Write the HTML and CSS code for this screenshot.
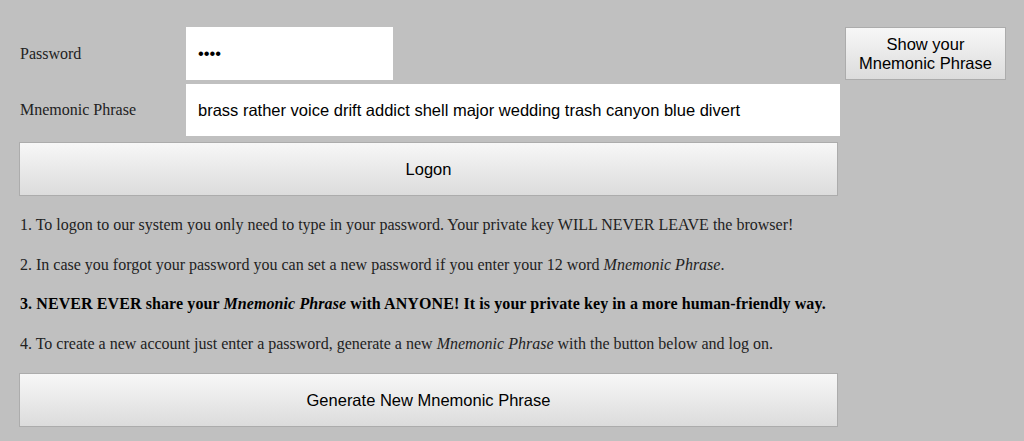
FILE: index.html
```html
<!DOCTYPE html>
<html>
<head>
<meta charset="utf-8">
<link rel="stylesheet" href="styles.css">
</head>
<body>
<div class="page">
  <div class="form">
    <label class="label" for="pw">Password</label>
    <div class="field"><input id="pw" class="input input-short" type="password" value="1234"></div>
    <button class="btn btn-show">Show your<br>Mnemonic Phrase</button>
    <label class="label" for="mn">Mnemonic Phrase</label>
    <div class="field"><input id="mn" class="input input-long" type="text" value="brass rather voice drift addict shell major wedding trash canyon blue divert"></div>
    <div></div>
  </div>
  <button class="btn btn-wide btn-logon">Logon</button>
  <div class="notes">
    <p>1. To logon to our system you only need to type in your password. Your private key WILL NEVER LEAVE the browser!</p>
    <p>2. In case you forgot your password you can set a new password if you enter your 12 word <i>Mnemonic Phrase</i>.</p>
    <p class="strong"><b>3. NEVER EVER share your <i>Mnemonic Phrase</i> with ANYONE! It is your private key in a more human-friendly way.</b></p>
    <p>4. To create a new account just enter a password, generate a new <i>Mnemonic Phrase</i> with the button below and log on.</p>
  </div>
  <button class="btn btn-wide btn-generate">Generate New Mnemonic Phrase</button>
</div>
</body>
</html>
```
FILE: styles.css
```css
html, body {
  margin: 0;
  padding: 0;
  background: #c0c0c0;
}
body {
  font-family: "Liberation Serif", "Times New Roman", serif;
  color: #222;
}
.page {
  padding: 27px 0 0 19px;
}
.form {
  display: grid;
  grid-template-columns: 162px 654px 161px;
  column-gap: 5px;
  row-gap: 4px;
  align-items: center;
}
.label {
  font-size: 16px;
  padding-left: 1px;
  color: #222;
}
.field {
  display: flex;
}
.input {
  box-sizing: border-box;
  border: none;
  outline: none;
  background: #fff;
  font-family: "Liberation Sans", Arial, sans-serif;
  font-size: 16.5px;
  color: #000;
  padding: 0 12px;
  margin: 0;
}
.input-short {
  width: 207px;
  height: 53px;
}
.input-long {
  width: 654px;
  height: 52px;
}
.btn {
  box-sizing: border-box;
  border: 1px solid #acacac;
  border-radius: 0;
  background: linear-gradient(to bottom, #f7f7f7, #dcdcdc);
  font-family: "Liberation Sans", Arial, sans-serif;
  font-size: 16.5px;
  color: #000;
  margin: 0;
  padding: 0;
  cursor: pointer;
}
.btn-show {
  height: 53px;
  width: 161px;
  line-height: 19px;
}
.btn-wide {
  display: block;
  width: 819px;
}
.btn-logon {
  height: 54px;
  margin-top: 6px;
}
.notes {
  display: flex;
  flex-direction: column;
  gap: 19.5px;
  margin: 19px 0 19.5px;
}
.notes p {
  margin: 0;
  font-size: 16px;
  line-height: 20px;
  padding-left: 1px;
}
.notes .strong {
  letter-spacing: 0.09px;
}
.notes b {
  color: #000;
}
.btn-generate {
  height: 54px;
}
```
